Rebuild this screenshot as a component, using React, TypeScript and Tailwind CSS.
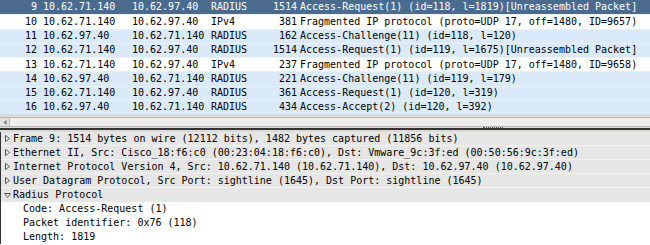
import React from "react";

type Row = { no: string; src: string; dst: string; proto: string; len: string; info: string; kind: "sel" | "blue" | "white" };

const rows: Row[] = [
  { no: "9", src: "10.62.71.140", dst: "10.62.97.40", proto: "RADIUS", len: "1514", info: "Access-Request(1) (id=118, l=1819)[Unreassembled Packet]", kind: "sel" },
  { no: "10", src: "10.62.71.140", dst: "10.62.97.40", proto: "IPv4", len: "381", info: "Fragmented IP protocol (proto=UDP 17, off=1480, ID=9657)", kind: "white" },
  { no: "11", src: "10.62.97.40", dst: "10.62.71.140", proto: "RADIUS", len: "162", info: "Access-Challenge(11) (id=118, l=120)", kind: "blue" },
  { no: "12", src: "10.62.71.140", dst: "10.62.97.40", proto: "RADIUS", len: "1514", info: "Access-Request(1) (id=119, l=1675)[Unreassembled Packet]", kind: "blue" },
  { no: "13", src: "10.62.71.140", dst: "10.62.97.40", proto: "IPv4", len: "237", info: "Fragmented IP protocol (proto=UDP 17, off=1480, ID=9658)", kind: "white" },
  { no: "14", src: "10.62.97.40", dst: "10.62.71.140", proto: "RADIUS", len: "221", info: "Access-Challenge(11) (id=119, l=179)", kind: "blue" },
  { no: "15", src: "10.62.71.140", dst: "10.62.97.40", proto: "RADIUS", len: "361", info: "Access-Request(1) (id=120, l=319)", kind: "blue" },
  { no: "16", src: "10.62.97.40", dst: "10.62.71.140", proto: "RADIUS", len: "434", info: "Access-Accept(2) (id=120, l=392)", kind: "blue" },
];

const tree = [
  "Frame 9: 1514 bytes on wire (12112 bits), 1482 bytes captured (11856 bits)",
  "Ethernet II, Src: Cisco_18:f6:c0 (00:23:04:18:f6:c0), Dst: Vmware_9c:3f:ed (00:50:56:9c:3f:ed)",
  "Internet Protocol Version 4, Src: 10.62.71.140 (10.62.71.140), Dst: 10.62.97.40 (10.62.97.40)",
  "User Datagram Protocol, Src Port: sightline (1645), Dst Port: sightline (1645)",
];

const children = ["Code: Access-Request (1)", "Packet identifier: 0x76 (118)", "Length: 1819"];

function TriRight() {
  return (
    <svg width="5" height="7" viewBox="0 0 5 7" className="shrink-0">
      <path d="M0.5 0.5 L4.5 3.5 L0.5 6.5 Z" fill="#ffffff" stroke="#555" strokeWidth="1" />
    </svg>
  );
}

function TriDown() {
  return (
    <svg width="7" height="5" viewBox="0 0 7 5" className="shrink-0">
      <path d="M0.5 0.5 L6.5 0.5 L3.5 4.5 Z" fill="#ffffff" stroke="#555" strokeWidth="1" />
    </svg>
  );
}

export default function App() {
  return (
    <div
      className="w-[650px] h-[245px] overflow-hidden bg-white text-[10px] leading-[14px] text-black whitespace-pre"
      style={{ fontFamily: '"DejaVu Sans Mono", monospace' }}
    >
      <div className="flex flex-col">
        {rows.map((r) => (
          <div
            key={r.no}
            className={
              "flex h-[14.25px] items-center " +
              (r.kind === "sel"
                ? "bg-[#4a6b8e] text-white"
                : r.kind === "blue"
                ? "bg-[#daeafa] border-t border-[#e8f1fb]"
                : "bg-white border-t border-[#eef3f9]")
            }
          >
            <div className="w-[37px] text-right">{r.no}</div>
            <div className="w-[95px] pl-[6px]">{r.src}</div>
            <div className="w-[79px]">{r.dst}</div>
            <div className="w-[48px]">{r.proto}</div>
            <div className="w-[38px] text-right">{r.len}</div>
            <div className="pl-[3px]">{r.info}</div>
          </div>
        ))}
      </div>
      <div className="h-[3px] bg-[#dcdad6]" />
      <div className="h-[10px] flex bg-[#eeedeb] border-y border-[#b9b7b2]">
        <div className="w-[10px] h-full border-r border-[#b9b7b2] bg-[#e2e1dd] flex items-center justify-center">
          <svg width="4" height="5" viewBox="0 0 4 5">
            <path d="M3.5 0 L0.5 2.5 L3.5 5 Z" fill="#777" />
          </svg>
        </div>
      </div>
      <div className="h-[1px] bg-[#dcdad6] flex">
        <div className="ml-[483px] w-[20px] h-[1px] border-t border-dotted border-[#555]" />
      </div>
      <div className="h-[2px] bg-[#333333]" />
      <div className="h-[2px] bg-[#dcdad6]" />
      <div className="flex flex-col border-l border-[#333]">
        {tree.map((t) => (
          <div key={t} className="h-[14px] flex items-center bg-[#e6e6e6] border-b border-[#f2f2f2]">
            <div className="w-[11px] flex justify-center pl-[1px]">
              <TriRight />
            </div>
            <div className="pl-[1px]">{t}</div>
          </div>
        ))}
        <div className="h-[14px] flex items-center bg-[#e6e6e6]">
          <div className="w-[11px] flex justify-center pl-[1px]">
            <TriDown />
          </div>
          <div className="pl-[1px]">Radius Protocol</div>
        </div>
        {children.map((c) => (
          <div key={c} className="h-[14px] flex items-center pl-[22px]">
            {c}
          </div>
        ))}
      </div>
    </div>
  );
}
